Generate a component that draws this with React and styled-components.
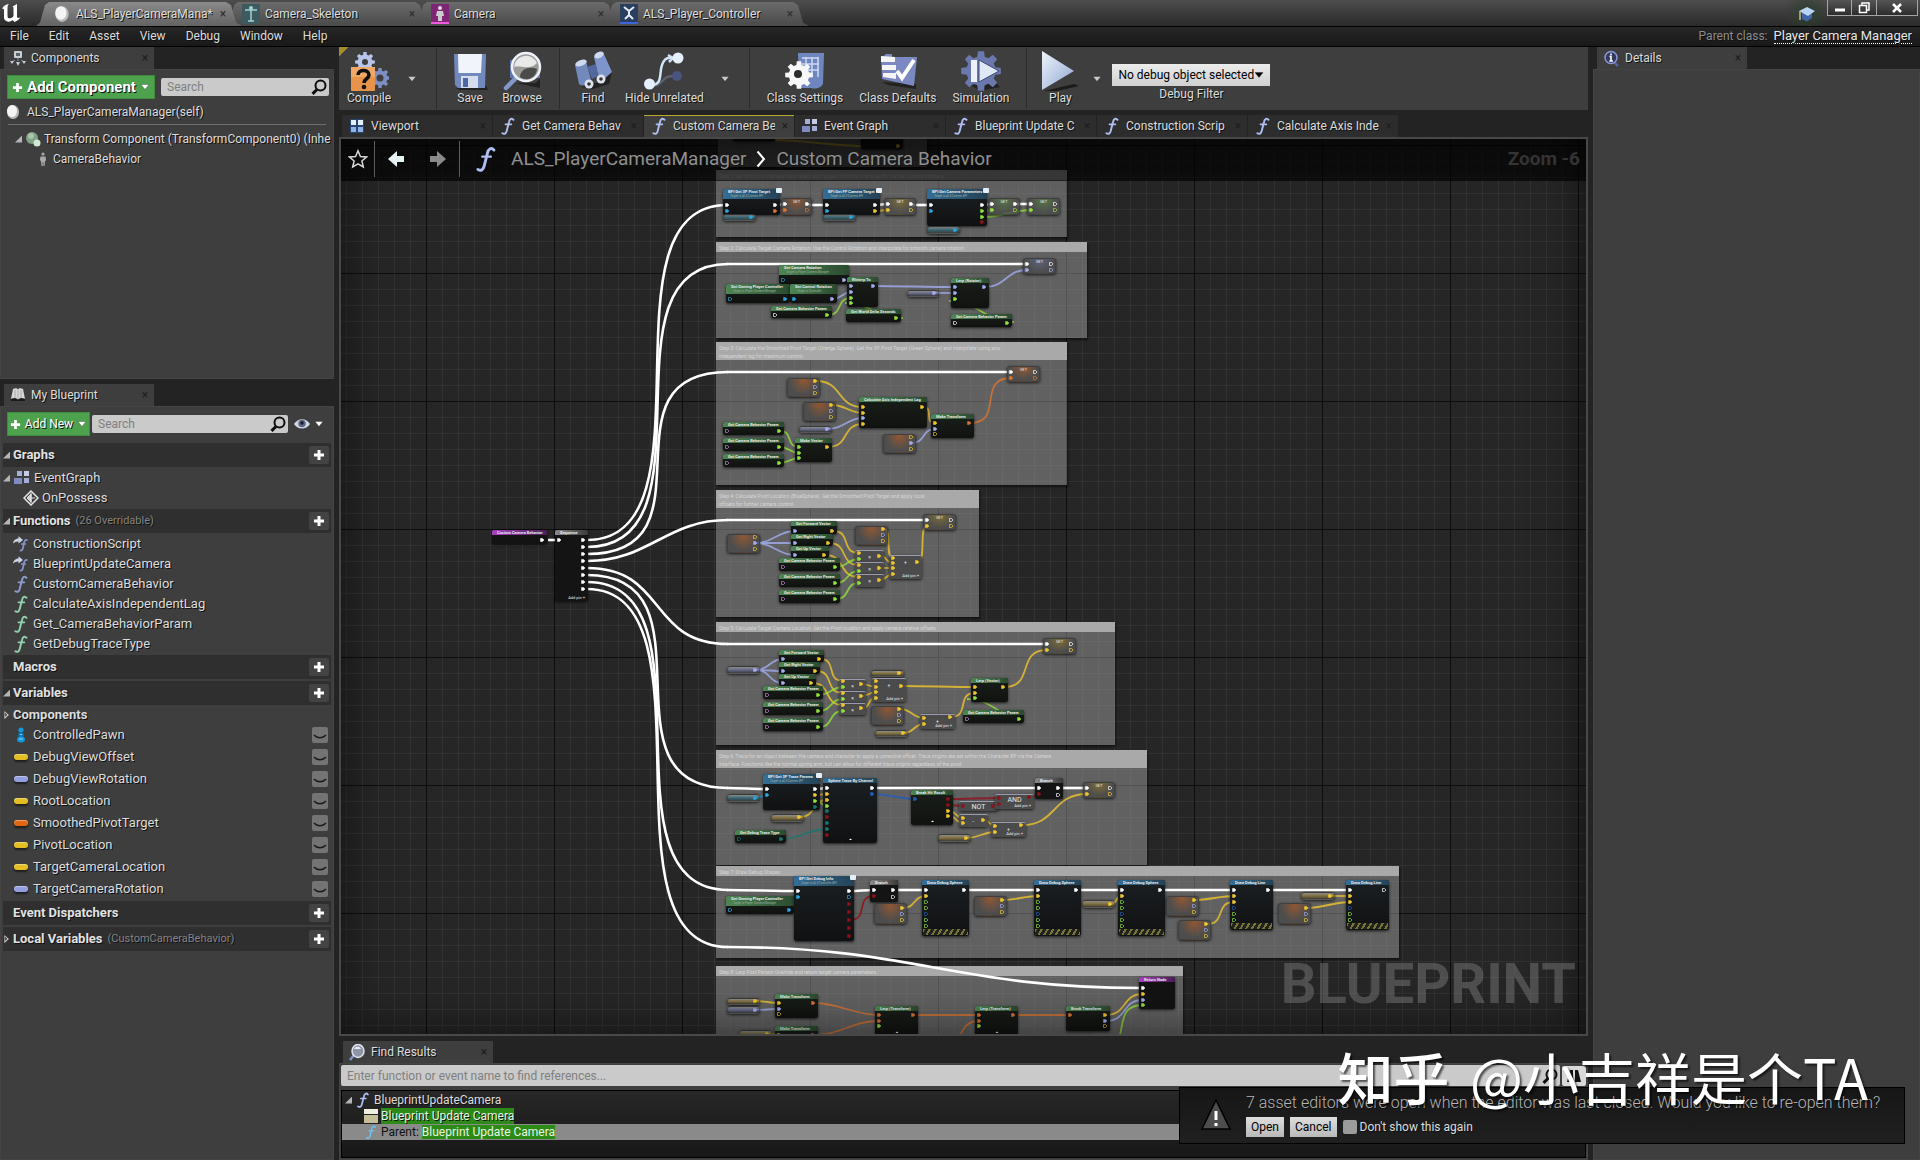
import React from 'react'
import styled, { createGlobalStyle, css } from 'styled-components'

const GlobalStyle = createGlobalStyle`
  * {
    box-sizing: border-box;
  }
  body {
    margin: 0;
    background: #232323;
    color: #dcdcdc;
    font-family: Roboto, 'Noto Sans CJK SC', sans-serif;
    font-size: 12px;
    line-height: 16px;
    overflow: hidden;
  }
  button, input, select {
    font: inherit;
    color: inherit;
    margin: 0;
    padding: 0;
    border: 0;
    background: none;
    text-shadow: inherit;
  }
  ul {
    list-style: none;
    margin: 0;
    padding: 0;
  }
`

/* ---------- icons ---------- */

const gear = (cx, cy, r, teeth) => {
  const pts = []
  const step = (Math.PI * 2) / teeth
  for (let i = 0; i < teeth; i++) {
    const a = i * step
    ;[[-0.32, 0.74], [-0.2, 1], [0.2, 1], [0.32, 0.74]].forEach(([off, k]) => {
      const t = a + off * step
      pts.push(`${(cx + Math.cos(t) * r * k).toFixed(1)},${(cy + Math.sin(t) * r * k).toFixed(1)}`)
    })
  }
  return pts.join(' ')
}

const FuncIcon = ({ color = '#aebdf2', size = 18 }) => (
  <svg width={size} height={size} viewBox="0 0 18 18" fill="none" stroke={color} strokeLinecap="round">
    <path d="M14.5 2.8C12.8.6 10.6 2 10 5L7.8 13.6C7.2 16.6 5.4 17.6 3.4 16.2" strokeWidth="2" />
    <path d="M6.4 7.4h6" strokeWidth="1.6" />
  </svg>
)

const OverrideIcon = () => (
  <svg width="18" height="18" viewBox="0 0 18 18" fill="none">
    <path d="M15.5 5.5c-1.500-1.500-3 0-3.400 2L11 13c-.5 2.300-1.800 3-3.200 2.200M9 9h5" stroke="#8793cc" strokeWidth="1.700" />
    <path d="M1 8.500C1.500 5 4 3.500 6.500 3.500V1.300L11 5 6.500 8.600V6.500C4.500 6.300 2.500 7 1 8.500z" fill="#cdd3e6" />
  </svg>
)

const GraphIcon = ({ size = 18 }) => (
  <svg width={size} height={size} viewBox="0 0 18 18">
    <g fill="#a5aed8">
      <rect x="4" y="2" width="5" height="5" />
      <rect x="11" y="2" width="5" height="5" fill="#c6cbe6" />
      <rect x="1" y="9" width="8" height="6" fill="#7f8ac2" />
      <rect x="11" y="9" width="5" height="5" />
    </g>
  </svg>
)

const ViewportIcon = () => (
  <svg width="18" height="18" viewBox="0 0 18 18">
    <rect x="2" y="2" width="14" height="14" fill="#27456e" />
    <path d="M3 3h5v5H3zM10 3h5v5h-5z" fill="#e6eefa" />
    <path d="M3 10h5v5H3zM10 10h5v5h-5z" fill="#8fb3e4" />
  </svg>
)

const EventIcon = () => (
  <svg width="16" height="16" viewBox="0 0 16 16" fill="none" stroke="#e6e6e6">
    <path d="M8 1l7 7-7 7-7-7z" strokeWidth="1.500" />
    <path d="M8 3v10M8 4L4 8l4 4z" fill="#cfcfcf" />
    <path d="M8 8h4" />
  </svg>
)

const SphereIcon = ({ size = 16 }) => (
  <svg width={size} height={size} viewBox="0 0 16 16">
    <ellipse cx="8" cy="8" rx="6" ry="7" fill="#b9b9b9" />
    <ellipse cx="7" cy="7" rx="5" ry="6" fill="#f4f4f4" />
  </svg>
)

const TransformIcon = () => (
  <svg width="16" height="16" viewBox="0 0 16 16">
    <circle cx="7" cy="7" r="6" fill="#7fa184" />
    <circle cx="6" cy="5" r="3" fill="#a9c4aa" />
    <circle cx="12" cy="12" r="3.500" fill="#d3ead2" />
  </svg>
)

const PersonIcon = ({ size = 14, color = '#a9a9a9' }) => (
  <svg width={size} height={size} viewBox="0 0 14 14" fill={color}>
    <circle cx="7" cy="2" r="1.600" />
    <path d="M4.500 4.500h5l.6 4-1 .3L8.500 14H7.300v-4h-.6v4H5.500l-.6-5.200-1-.3z" />
  </svg>
)

const ComponentsIcon = () => (
  <svg width="16" height="16" viewBox="0 0 16 16" fill="#c9cdd6">
    <rect x="4" y="1" width="8" height="7" rx="1" />
    <rect x="6" y="3" width="4" height="3" fill="#5b616d" />
    <path d="M8 8v3M2 12l3-2M14 12l-3-2" stroke="#8d93a3" />
    <path d="M0 11l4 0-2 3zM12 11h4l-2 3zM6 12h4l-2 4z" />
  </svg>
)

const BookIcon = () => (
  <svg width="16" height="16" viewBox="0 0 16 16">
    <path d="M3 2c2-1 4-1 5 .5C9 1 11 1 13 2l2 10c-3-1-5-1-7 .5C6 11 4 11 1 12z" fill="#d9d9d9" />
    <path d="M1 12c3-1 5-1 7 1 2-2 4-2 7-1v2H1z" fill="#1b1b1b" />
    <path d="M8 3v9M5 3v8M11 3v8" stroke="#a8a8a8" />
  </svg>
)

const LensIcon = () => (
  <svg width="17" height="17" viewBox="0 0 17 17">
    <path d="M5 11l-4 5" stroke="#7f93c6" strokeWidth="2.500" />
    <ellipse cx="9" cy="7" rx="6" ry="6.500" fill="#8d95a6" stroke="#dfe4ef" strokeWidth="1.500" />
    <path d="M5 5c1-3 6-3 7 0z" fill="#e9ecf4" />
  </svg>
)

const DetailsIcon = () => (
  <svg width="17" height="17" viewBox="0 0 17 17">
    <path d="M11 12l4 4" stroke="#5560a8" strokeWidth="2.500" />
    <circle cx="8" cy="7.500" r="6" fill="#33395c" stroke="#8c98d8" strokeWidth="1.500" />
    <path d="M8 3.500v1.800M6.500 6.500H8V11M6.300 11h3.600" stroke="#fff" strokeWidth="1.600" fill="none" />
  </svg>
)

const SearchIcon = ({ size = 16 }) => (
  <svg width={size} height={size} viewBox="0 0 16 16" fill="none" stroke="#0d0d0d">
    <circle cx="9.500" cy="6.500" r="5" strokeWidth="2" />
    <path d="M6 10.500L1.500 14.800" strokeWidth="3" />
  </svg>
)

const PlusIcon = ({ size = 12 }) => (
  <svg width={size} height={size} viewBox="0 0 12 12">
    <path d="M6 1v10M1 6h10" stroke="#fff" strokeWidth="3" />
  </svg>
)

const DownIcon = ({ color = '#fff' }) => (
  <svg width="10" height="8" viewBox="0 0 10 8">
    <path d="M1 1.500h8L5 6.500z" fill={color} stroke="#0008" strokeWidth=".5" />
  </svg>
)

const EyeIcon = () => (
  <svg width="18" height="14" viewBox="0 0 18 14">
    <path d="M1 7c4-6.500 12-6.500 16 0-4 6-12 6-16 0z" fill="#d7dae6" />
    <circle cx="9" cy="6.500" r="3.800" fill="#5f6988" />
    <circle cx="9" cy="6" r="1.700" fill="#1a1d28" />
  </svg>
)

const PawnIcon = () => (
  <svg width="18" height="16" viewBox="0 0 18 16" fill="#1398dc">
    <circle cx="9" cy="3" r="2.600" />
    <ellipse cx="9" cy="8" rx="3" ry="2.400" fill="#0d74ad" />
    <ellipse cx="9" cy="12.500" rx="4" ry="3" />
    <path d="M7 12h4M8 7.500h2" stroke="#8fd6ff" />
  </svg>
)

const UnrealLogo = () => (
  <svg width="24" height="22" viewBox="0 0 24 22" fill="none">
    <path d="M2 7C3 4 6 2.500 9 2c-1 1-1.500 2-1.500 3.500V14c0 2 1 2.500 2.500 2.200C11.500 16 13 15 13.500 14V5.500L12.500 4.500 17 2v12.500c0 1.500 1.500 2 3.500.5-1.500 3-4 4-6 5l-2-2c-1.500 1.500-3.500 2-5 1.500C5 18.800 4 17.500 4 15V8c0-1-1-1.500-2-1z" fill="#fff" />
  </svg>
)

const CapIcon = () => (
  <svg width="18" height="16" viewBox="0 0 18 16">
    <path d="M4 7v6l5 2.500L14 12V7z" fill="#3f66a3" />
    <path d="M1 5l8-4 8 4-7 5z" fill="#b9d4f5" />
    <path d="M2 5v9" stroke="#c9b98f" strokeWidth="1.500" />
  </svg>
)

const CompileIcon = () => (
  <svg width="40" height="40" viewBox="0 0 40 40">
    <polygon points={gear(16, 11, 10, 8)} fill="#b9c6ec" />
    <circle cx="16" cy="11" r="3" fill="#3e3e3e" />
    <polygon points={gear(31, 27, 10, 8)} fill="#7f8fc4" />
    <circle cx="31" cy="27" r="3.500" fill="#3e3e3e" />
    <rect x="2" y="16" width="24" height="24" rx="1" fill="#e8934a" />
    <rect x="2" y="16" width="24" height="10" fill="#f0a866" />
    <path d="M9 24c0-6 11-6 11 0 0 4-5 3.500-5 8" stroke="#111" strokeWidth="3.600" fill="none" />
    <circle cx="15" cy="36" r="2.300" fill="#111" />
  </svg>
)

const SaveIcon = () => (
  <svg width="40" height="40" viewBox="0 0 40 40">
    <path d="M6 37l30-2 2 4H10z" fill="#222" />
    <path d="M4 3h32l-1 34H8l-3-3z" fill="#7289bd" />
    <path d="M8 3h24l-1 19H8.500z" fill="#f1f4fa" />
    <rect x="11" y="25" width="17" height="12" fill="#d5dcec" />
    <rect x="13" y="27" width="5" height="9" fill="#4c66a6" />
  </svg>
)

const BrowseIcon = () => (
  <svg width="40" height="40" viewBox="0 0 40 40">
    <path d="M14 32h20l4-5v10z" fill="#222" />
    <rect x="8" y="9" width="30" height="18" fill="#5f76b0" />
    <path d="M15 26L4 37" stroke="#8397c9" strokeWidth="4.500" strokeLinecap="round" />
    <circle cx="24" cy="16" r="14" fill="#9a9a98" stroke="#eef2fb" strokeWidth="2.500" />
    <path d="M12 16a12 12 0 0 1 23-4c-8 8-16 2-23 4z" fill="#e9e9e9" />
    <path d="M18 26c0-8 10-11 17-8-1 9-10 13-17 8z" fill="#4b4b49" />
  </svg>
)

const FindIcon = () => (
  <svg width="40" height="40" viewBox="0 0 40 40">
    <path d="M8 36l22-6 9-9-3 12-16 5z" fill="#222" />
    <path d="M2 14l11-4 5 19c-2 5-9 7-12 4z" fill="#7289bd" />
    <path d="M21 6l9-5 9 20-7 6c-5 0-8-4-8-8z" fill="#7e95cb" />
    <path d="M14 16l9-3 2 12-6 3z" fill="#53689e" />
    <ellipse cx="8" cy="12" rx="6" ry="3" transform="rotate(-20 8 12)" fill="#ced9f0" />
    <ellipse cx="26" cy="4" rx="5" ry="3" transform="rotate(-25 26 4)" fill="#ced9f0" />
    <circle cx="16" cy="33" r="4.500" fill="#dce2ee" />
    <circle cx="28" cy="28" r="4.500" fill="#dce2ee" />
    <circle cx="16" cy="33" r="1.800" fill="#333" />
    <circle cx="28" cy="28" r="1.800" fill="#333" />
  </svg>
)

const HideIcon = () => (
  <svg width="40" height="40" viewBox="0 0 40 40" fill="none">
    <path d="M8 35c12 0 10-13 24-9" stroke="#5a6170" strokeWidth="2.500" />
    <circle cx="33" cy="25" r="5" fill="#47557f" />
    <path d="M7 34c12 0 8-12 11-20 2-6 6-8 10-7M24 4l5 3-4 4" stroke="#d3e4f7" strokeWidth="2.500" />
    <circle cx="34" cy="7" r="5.500" fill="#e4f0fd" />
    <circle cx="5.500" cy="33" r="5.500" fill="#e4f0fd" />
  </svg>
)

const SettingsIcon = () => (
  <svg width="40" height="40" viewBox="0 0 40 40">
    <path d="M13 2h26l-1 31c-3 5-8 5-12 4H14z" fill="#6f86c0" />
    <path d="M17 7h17M17 13h17M17 19h17M21 6v20M27 6v20M33 6v20" stroke="#cdd9f3" strokeWidth="1.500" />
    <polygon points={gear(14, 24, 14, 8)} fill="#f7f7f7" />
    <circle cx="13" cy="23" r="4" fill="#2c2c2c" />
  </svg>
)

const DefaultsIcon = () => (
  <svg width="40" height="40" viewBox="0 0 40 40">
    <path d="M4 31l34 2v5l-28-4z" fill="#222" />
    <path d="M8 3h6v3h25l-3 29L4 28 3 7z" fill="#7c88c2" />
    <path d="M3 5l14 1v5H3zM4 14h14v5H4zM5 22h13v6L5 26z" fill="#f4f4f6" />
    <path d="M19 20l5 7L36 9" stroke="#fff" strokeWidth="4" fill="none" />
  </svg>
)

const SimulationIcon = () => (
  <svg width="40" height="40" viewBox="0 0 40 40">
    <path d="M10 34l25-2 4 4-20 4z" fill="#222" />
    <polygon points={gear(20, 20, 20, 8)} fill="#6b78ae" />
    <path d="M10 9h6v22h-6z" fill="#eef1fa" />
    <path d="M18 9l20 11-20 11z" fill="#dfe8f7" stroke="#3c4670" />
  </svg>
)

const PlayIcon = () => (
  <svg width="40" height="40" viewBox="0 0 40 40">
    <defs>
      <linearGradient id="playFill" x1="0" y1="0" x2="1" y2="1">
        <stop offset="0" stopColor="#eef4fb" />
        <stop offset="1" stopColor="#8fa6d2" />
      </linearGradient>
    </defs>
    <path d="M4 40l30-7 5 2-22 5z" fill="#1b1b1b" />
    <path d="M2 0l32 20L2 39z" fill="url(#playFill)" />
  </svg>
)

/* ---------- shared parts ---------- */

const shadow = css`
  text-shadow: 1px 1px 0 #111;
`

const Page = styled.div`
  display: flex;
  flex-direction: column;
  height: 100vh;
  min-height: 600px;
  background: #232323;
  ${shadow}
`

const TitleBar = styled.header`
  display: flex;
  align-items: flex-start;
  height: 27px;
  padding-top: 2px;
  background: linear-gradient(#4d4d4d, #2a2a2a);
  border-bottom: 1px solid #000;
`

const Logo = styled.div`
  width: 36px;
  height: 22px;
`

const AssetTab = styled.div`
  position: relative;
  display: flex;
  align-items: center;
  gap: 5px;
  width: 206px;
  height: 24px;
  margin-right: -17px;
  padding: 0 14px 0 17px;
  z-index: ${p => (p.$active ? 2 : 1)};
  background: ${p => (p.$active ? 'linear-gradient(#8a8a8a, #636363)' : 'linear-gradient(#6b6b6b, #4a4a4a)')};
  clip-path: polygon(0 100%, 4px 85%, 9px 12%, 13px 0, 190px 0, 195px 12%, 200px 85%, 206px 100%);
`

const TabLabel = styled.button`
  flex: 1;
  min-width: 0;
  overflow: hidden;
  white-space: nowrap;
  text-align: left;
`

const CloseButton = styled.button`
  width: 10px;
  height: 16px;
  color: ${p => (p.$dim ? '#1d1d1d' : '#2c2c2c')};
  text-shadow: none;
`

const WindowTools = styled.div`
  display: flex;
  align-items: flex-start;
  margin-left: auto;
  margin-top: -2px;
  padding-right: 2px;
`

const CapBadge = styled.div`
  display: flex;
  justify-content: center;
  width: 60px;
  height: 26px;
  margin-right: -10px;
  padding-top: 6px;
  background: radial-gradient(circle, #2f3f2f, transparent 70%);
`

const WindowButton = styled.button`
  display: flex;
  align-items: center;
  justify-content: center;
  width: ${p => (p.$wide ? 41 : 25)}px;
  height: 16px;
  border: 1px solid #a5a5a5;
  border-top: 0;
  border-left-width: ${p => (p.$first ? 1 : 0)}px;
  background: linear-gradient(#555, #2d2d2d);
`

const MenuBar = styled.nav`
  display: flex;
  align-items: center;
  gap: 20px;
  height: 20px;
  padding: 0 8px 2px 10px;
  background: linear-gradient(#262626, #191919);
  border-bottom: 1px solid #000;
`

const ParentClass = styled.div`
  display: flex;
  gap: 6px;
  margin-left: auto;
  color: #8c8c8c;
  a {
    color: #e6e6e6;
    font-size: 13px;
    line-height: 15px;
    text-decoration: none;
    border-bottom: 1px dotted #fff;
  }
`

const Main = styled.main`
  display: grid;
  grid-template-columns: 334px minmax(0, 1fr) 327px;
  gap: 5px;
  flex: 1;
  min-height: 0;
`

const Column = styled.div`
  display: flex;
  flex-direction: column;
  min-width: 0;
  min-height: 0;
`

const TabStrip = styled.div`
  display: flex;
  gap: 1px;
  margin-top: ${p => (p.$spaced ? 5 : 0)}px;
  padding: 0 ${p => p.$inset || 4}px;
`

const PanelTab = styled.div`
  display: flex;
  align-items: center;
  gap: 5px;
  width: 150px;
  height: 22px;
  padding: 0 4px 0 6px;
  background: ${p => (p.$muted ? '#2d2d2d' : '#3e3e3e')};
  box-shadow: inset 0 1px 0 ${p => (p.$hot ? '#b9a82a' : 'transparent')};
`

const PanelBody = styled.section`
  display: flex;
  flex-direction: column;
  flex: ${p => p.$size || '1'};
  min-height: 0;
  background: #3e3e3e;
  border: 1px solid #444;
  overflow: hidden;
`

const ToolRow = styled.div`
  display: flex;
  align-items: center;
  gap: ${p => p.$gap || 6}px;
  padding: 5px 4px 5px 6px;
`

const AddButton = styled.button`
  display: flex;
  flex: none;
  align-items: center;
  justify-content: center;
  gap: 4px;
  width: ${p => p.$width}px;
  height: 24px;
  color: #fff;
  background: #4ea24e;
  border: 1px solid #3f8a3f;
  font-size: ${p => (p.$bold ? 15 : 12)}px;
  font-weight: ${p => (p.$bold ? 700 : 400)};
  white-space: nowrap;
`

const SearchBox = styled.label`
  display: flex;
  align-items: center;
  flex: 1;
  min-width: 0;
  height: ${p => p.$height || 18}px;
  padding: 0 2px 0 6px;
  border-radius: 2px;
  background: #cacaca;
  text-shadow: none;
  input {
    flex: 1;
    min-width: 0;
    color: #222;
    outline: 0;
  }
  input::placeholder {
    color: #808080;
    opacity: 1;
  }
`

const IconButton = styled.button`
  display: flex;
  align-items: center;
  gap: 3px;
  padding: 0 5px 0 3px;
`

const Tree = styled.ul`
  padding-top: ${p => (p.$large ? 1 : 0)}px;
  font-size: ${p => (p.$large ? 13 : 12)}px;
`

const TreeRow = styled.li`
  display: flex;
  align-items: center;
  gap: 3px;
  height: ${p => p.$height || 20}px;
  padding-left: ${p => p.$indent || 0}px;
  padding-right: 5px;
  white-space: nowrap;
  overflow: hidden;
  svg {
    flex: none;
  }
`

const Divider = styled.hr`
  width: calc(100% - 14px);
  margin: 4px 7px;
  border: 0;
  border-top: 1px solid #6e6e6e;
`

const Caret = styled.span`
  flex: none;
  width: 7px;
  height: 7px;
  background: #b5b5b5;
  clip-path: polygon(100% 0, 100% 100%, 0 100%);
`

const CaretClosed = styled.span`
  width: 7px;
  height: 8px;
  background: #c9c9c9;
  clip-path: polygon(20% 0, 85% 50%, 20% 100%, 20% 80%, 60% 50%, 32% 20%, 32% 100%, 20% 100%);
`

const SectionHead = styled.div`
  display: flex;
  align-items: center;
  height: 24px;
  margin: 2px 2px 0;
  background: #2f2f2f;
  font-size: 13px;
  font-weight: 700;
  color: #e2e2e2;
  ul + & {
    margin-top: 1px;
  }
  small {
    margin-left: 5px;
    color: #848484;
    font-size: 11px;
    font-weight: 400;
  }
`

const CaretSlot = styled.span`
  display: flex;
  width: 10px;
`

const PlusButton = styled.button`
  display: flex;
  align-items: center;
  justify-content: center;
  width: 20px;
  height: 18px;
  margin-left: auto;
  margin-right: 2px;
  border-radius: 2px;
  background: #434343;
`

const VarPill = styled.span`
  width: 14px;
  height: 6px;
  margin: 0 2px;
  border-radius: 3px;
  background: ${p => p.$color};
  box-shadow: inset 0 1px 1px #fff6, 0 2px 2px #0008;
`

const Visibility = styled.button`
  width: 16px;
  height: 16px;
  margin-left: auto;
  border-radius: 2px;
  background: #747474;
  display: flex;
`

/* ---------- toolbar ---------- */

const Toolbar = styled.div`
  display: flex;
  align-items: center;
  height: 63px;
  background: linear-gradient(135deg, #a58c2a 7px, #3e3e3e 7px);
`

const ToolButton = styled.button`
  display: flex;
  flex-direction: column;
  align-items: center;
  min-width: 48px;
  padding: 0 8px 1px;
  line-height: 15px;
  white-space: nowrap;
  svg {
    margin: 0 -4px;
  }
`

const ToolArrow = styled.button`
  display: flex;
  width: 12px;
  margin: 0 8px;
`

const ToolSep = styled.span`
  width: 1px;
  height: 61px;
  margin: 0 9px;
  background: #2b2b2b;
`

const DebugFilter = styled.div`
  display: flex;
  flex-direction: column;
  align-items: center;
  padding-top: 17px;
  align-self: flex-start;
`

const SelectWrap = styled.div`
  display: flex;
  align-items: center;
  height: 22px;
  padding: 0 6px;
  background: linear-gradient(#ececec, #cfcfcf);
  color: #000;
  text-shadow: none;
  select {
    appearance: none;
    outline: 0;
  }
`

/* ---------- graph ---------- */

const PAN = { x: 341, y: 139 }

const Canvas = styled.section`
  position: relative;
  flex: 1;
  min-height: 0;
  overflow: hidden;
  border: 2px solid #484848;
  background-color: #262626;
  background-image:
    linear-gradient(90deg, #0d0d0d 1px, transparent 1px),
    linear-gradient(#0d0d0d 1px, transparent 1px),
    linear-gradient(90deg, #323232 1px, transparent 1px),
    linear-gradient(#323232 1px, transparent 1px);
  background-size: 128px 128px, 128px 128px, 16px 16px, 16px 16px;
  background-position: 85px 0, 0 6px, 5px 0, 0 6px;
`

const Vignette = styled.div`
  position: absolute;
  inset: 0;
  box-shadow: inset 0 0 50px #0009;
  pointer-events: none;
`

const CommentBox = styled.div`
  position: absolute;
  background: #a6a6a677;
  box-shadow: 1px 2px 2px #0008;
  text-shadow: none;
`

const CommentHead = styled.div`
  padding: 2px 3px 0;
  background: #a9a9a9;
  color: #d6d6d6;
  font-size: 5px;
  line-height: 8px;
  white-space: pre-line;
`

const NODE_STYLES = {
  fn: css`background: linear-gradient(#1a1f1b, #101210); --head: linear-gradient(90deg, #4d8653, #2a4a2f);`,
  call: css`background: linear-gradient(#1b1f22, #101112); --head: linear-gradient(90deg, #346e97, #244256);`,
  flow: css`background: #141414; --head: linear-gradient(90deg, #8a8a8a, #3a3a3a);`,
  entry: css`background: #131313; --head: linear-gradient(90deg, #a93fc0, #4b1f55);`,
  set: css`
    background: radial-gradient(ellipse at 50% 8%, var(--tint), transparent 65%), #484848cc;
    border: 1px solid #3338;
    border-radius: 3px;
  `,
  pill: css`
    background: linear-gradient(#ccc6, var(--tint) 50%, #333c);
    border: 1px solid #3338;
    border-radius: 4px;
  `,
  op: css`
    background: #484848e8;
    border-top: 1px solid #9a9ab0;
    border-radius: 2px;
  `,
}

const TINTS = { y: '#8a7430cc', o: '#a0592ecc', l: '#62688fcc', g: '#587f47cc', c: '#2b6676cc' }

const NodeBox = styled.div`
  position: absolute;
  border-radius: 2px;
  box-shadow: 0 1px 3px #000b;
  color: #e9e9e9;
  font-size: 4px;
  line-height: 5px;
  text-align: center;
  text-shadow: none;
  --tint: ${p => TINTS[p.$tint] || '#555'};
  ${p => NODE_STYLES[p.$kind]}
`

const NodeHead = styled.div`
  height: ${p => (p.$tall ? 10 : 5)}px;
  padding: 0 5px;
  border-radius: 2px 2px 0 0;
  background: var(--head);
  font-weight: 700;
  text-align: left;
  white-space: nowrap;
  em {
    display: block;
    padding-left: 2px;
    color: #9fb09f;
    font-weight: 400;
    font-size: 3px;
  }
`

const Envelope = styled.span`
  position: absolute;
  right: -2px;
  top: -1px;
  width: 6px;
  height: 5px;
  border-radius: 1px;
  background: #e4f1fb;
`

const Hazard = styled.div`
  position: absolute;
  left: 1px;
  right: 1px;
  bottom: 1px;
  height: 6px;
  background: repeating-linear-gradient(120deg, #74753a 0 2px, #22221a 2px 5px);
`

const OpText = styled.div`
  padding-top: 4px;
  font-size: ${p => (p.$big ? 7 : 5)}px;
  line-height: ${p => (p.$big ? 3 : 5)}px;
`

const AddPin = styled.div`
  position: absolute;
  right: 3px;
  bottom: 1px;
`

const Wires = styled.svg`
  position: absolute;
  left: 0;
  top: 0;
  width: 100%;
  height: 100%;
  pointer-events: none;
`

const PIN = { w: '#fff', y: '#f0c62e', o: '#dc7430', c: '#2ba6de', l: '#a3adf0', g: '#93e23c', r: '#8e1119', t: '#14786f', b: '#235dbd', p: '#c48bd8' }

// x, y, width, height, header height, text
const comments = [
  [718, 120, 209, 47, 10, ''],
  [716, 170, 351, 67, 10, 'Step 1: Get Info from Camera Parameters and Targets from the Character BP via the Camera Interface'],
  [716, 242, 371, 96, 10, 'Step 2: Calculate Target Camera Rotation. Use the Control Rotation and interpolate for smooth camera rotation.'],
  [716, 342, 351, 143, 18, 'Step 3: Calculate the Smoothed Pivot Target (Orange Sphere). Get the 3P Pivot Target (Green Sphere) and interpolate using axis\nindependent lag for maximum control.'],
  [716, 490, 263, 127, 18, 'Step 4: Calculate Pivot Location (BlueSphere). Get the Smoothed Pivot Target and apply local\noffsets for further camera control.'],
  [716, 622, 399, 123, 10, 'Step 5: Calculate Target Camera Location. Get the Pivot location and apply camera relative offsets.'],
  [716, 750, 431, 115, 18, 'Step 6: Trace for an object between the camera and character to apply a corrective offset. Trace origins are set within the Character BP via the Camera\nInterface. Functions like the normal spring arm, but can allow for different trace origins regardless of the pivot.'],
  [716, 866, 683, 92, 10, 'Step 7: Draw Debug Shapes.'],
  [716, 966, 467, 90, 10, 'Step 8: Lerp First Person Override and return target camera parameters.'],
]

const param = 'Get Camera Behavior Param'

// kind, x, y, width, height, title, input pins, output pins, extras
// a pin is its y and its colour; a capital letter is an unconnected pin
const nodes = [
  ['flow', 733, 130, 42, 11, '', '', ''],
  ['flow', 861, 130, 42, 19, '', '', '146y'],
  ['call', 723, 189, 57, 26, 'BPI Get 3P Pivot Target', '205w 211c', '205w 211o', { sub: 'Target is ALS Camera BPI', mail: 1 }],
  ['pill', 723, 214, 33, 7, '', '', '217c', { tint: 'c' }],
  ['set', 781, 198, 31, 17, 'SET', '204w 210o', '204w 210O', { tint: 'o' }],
  ['call', 823, 189, 57, 26, 'BPI Get FP Camera Target', '205w 211c', '205w 211y', { sub: 'Target is ALS Camera BPI', mail: 1 }],
  ['pill', 823, 214, 33, 7, '', '', '217c', { tint: 'c' }],
  ['set', 884, 198, 32, 17, 'SET', '204w 210y', '204w 210Y', { tint: 'y' }],
  ['call', 927, 189, 60, 37, 'BPI Get Camera Parameters', '205w 211c', '205w 211g 217g 222r', { sub: 'Target is ALS Camera BPI', mail: 1 }],
  ['pill', 927, 226, 33, 8, '', '', '230c', { tint: 'c' }],
  ['set', 988, 198, 32, 17, 'SET', '204w 210g', '204w 210G', { tint: 'g' }],
  ['set', 1027, 198, 33, 17, 'SET', '204w 210g', '204W 210G', { tint: 'g' }],

  ['fn', 779, 265, 70, 19, 'Get Camera Rotation', '280C', '280l', { sub: 'Target is Player Camera Manager' }],
  ['fn', 726, 284, 64, 19, 'Get Owning Player Controller', '299C', '299c', { sub: 'Target is Player Camera Manager' }],
  ['fn', 790, 284, 47, 19, 'Get Control Rotation', '299c', '299l', { sub: 'Target is Controller' }],
  ['fn', 771, 306, 61, 12, param, '315W', '315g'],
  ['fn', 847, 277, 31, 30, 'RInterp To', '286l 292l 298g 303g', '286l'],
  ['fn', 846, 309, 55, 13, 'Get World Delta Seconds', '', '318g'],
  ['pill', 907, 290, 32, 7, '', '', '293l', { tint: 'l' }],
  ['fn', 951, 278, 38, 30, 'Lerp (Rotator)', '287l 293l 299g', '287l'],
  ['fn', 951, 314, 61, 13, param, '323W', '323g'],
  ['set', 1023, 258, 33, 16, 'SET', '264w 270l', '264W 270L', { tint: 'l' }],

  ['set', 787, 378, 33, 19, '', '', '381y 387L 393Y', { tint: 'o' }],
  ['set', 803, 402, 33, 19, '', '', '405y 411L 417Y', { tint: 'o' }],
  ['pill', 799, 426, 33, 7, '', '', '429l', { tint: 'l' }],
  ['set', 883, 434, 33, 19, '', '', '437Y 443l 449Y', { tint: 'o' }],
  ['fn', 723, 422, 61, 13, param, '431P', '431g'],
  ['fn', 723, 438, 61, 13, param, '447P', '447g'],
  ['fn', 723, 454, 61, 13, param, '463P', '463g'],
  ['fn', 795, 438, 37, 24, 'Make Vector', '447g 453g 458g', '447y'],
  ['fn', 859, 397, 68, 31, 'Calculate Axis Independent Lag', '407y 413y 418l 424y', '407y'],
  ['fn', 931, 414, 43, 24, 'Make Transform', '423y 429l 434Y', '423o'],
  ['set', 1007, 366, 33, 16, 'SET', '372w 378o', '372W 378O', { tint: 'o' }],

  ['entry', 492, 530, 55, 14, 'Custom Camera Behavior', '', '540w'],
  ['flow', 555, 530, 33, 71, 'Sequence', '540w', '540w 547w 554w 561w 568w 575w 582w 589w', { add: 1 }],

  ['set', 727, 534, 33, 19, '', '', '537Y 543l 549Y', { tint: 'o' }],
  ['fn', 791, 521, 46, 13, 'Get Forward Vector', '531l', '531y'],
  ['fn', 791, 534, 42, 12, 'Get Right Vector', '543l', '543y'],
  ['fn', 791, 546, 38, 12, 'Get Up Vector', '555l', '555y'],
  ['fn', 779, 558, 61, 13, param, '567P', '567g'],
  ['fn', 779, 574, 61, 13, param, '583P', '583g'],
  ['fn', 779, 590, 61, 13, param, '599P', '599g'],
  ['set', 855, 526, 33, 19, '', '', '529y 535L 541Y', { tint: 'o' }],
  ['op', 855, 550, 29, 12, '×', '553y 559g', '556y'],
  ['op', 855, 562, 29, 12, '×', '565y 571g', '568y'],
  ['op', 855, 574, 29, 13, '×', '577y 583g', '580y'],
  ['op', 889, 555, 33, 24, '+', '558y 563y 568y 574y', '562y', { add: 1 }],
  ['set', 923, 514, 33, 16, 'SET', '520w 526y', '520W 526Y', { tint: 'y' }],

  ['pill', 727, 666, 33, 8, '', '', '670l', { tint: 'l' }],
  ['fn', 779, 650, 45, 12, 'Get Forward Vector', '659l', '659y'],
  ['fn', 779, 662, 41, 12, 'Get Right Vector', '671l', '671y'],
  ['fn', 779, 674, 37, 12, 'Get Up Vector', '683l', '683y'],
  ['fn', 763, 686, 60, 13, param, '695P', '695g'],
  ['fn', 763, 702, 60, 13, param, '711P', '711g'],
  ['fn', 763, 718, 60, 13, param, '727P', '727g'],
  ['op', 839, 679, 27, 12, '×', '681y 687g', '684y'],
  ['op', 839, 691, 27, 12, '×', '693y 699g', '696y'],
  ['op', 839, 703, 27, 12, '×', '705y 711g', '708y'],
  ['pill', 871, 670, 33, 7, '', '', '673y', { tint: 'y' }],
  ['op', 872, 678, 34, 24, '+', '681y 687y 692y 698y', '686y', { add: 1 }],
  ['set', 871, 706, 33, 19, '', '', '709y 715L 721Y', { tint: 'o' }],
  ['pill', 875, 730, 33, 7, '', '', '733y', { tint: 'y' }],
  ['op', 920, 714, 35, 15, '+', '718y 724y', '717y', { add: 1 }],
  ['fn', 971, 678, 37, 24, 'Lerp (Vector)', '687y 693y 698g', '687y'],
  ['fn', 963, 710, 61, 13, param, '719P', '719g'],
  ['set', 1043, 638, 33, 16, 'SET', '644w 650y', '644W 650Y', { tint: 'y' }],

  ['call', 763, 774, 57, 36, 'BPI Get 3P Trace Params', '789w 795c', '789w 795y 801g 807t', { sub: 'Target is ALS Camera BPI', mail: 1 }],
  ['pill', 727, 794, 33, 8, '', '', '798c', { tint: 'c' }],
  ['pill', 771, 814, 33, 8, '', '', '817y', { tint: 'y' }],
  ['fn', 735, 830, 51, 13, 'Get Debug Trace Type', '839T', '839t'],
  ['call', 823, 778, 54, 65, 'Sphere Trace By Channel', '788w 794y 800y 806g 811t 817r 823t 829t 835r', '788w 794b', { more: 1 }],
  ['fn', 911, 790, 42, 35, 'Break Hit Result', '799b', '799r 805r 811y 816y', { more: 1 }],
  ['op', 959, 801, 39, 10, 'NOT', '806r', '806r', { big: 1 }],
  ['op', 995, 794, 39, 15, 'AND', '798r 804r', '797r', { add: 1, big: 1 }],
  ['op', 959, 814, 29, 13, '−', '818y 823y', '820y'],
  ['op', 991, 822, 35, 15, '+', '826y 832y', '825y', { add: 1 }],
  ['pill', 938, 834, 33, 8, '', '', '838y', { tint: 'y' }],
  ['flow', 1035, 778, 28, 21, 'Branch', '788w 794r', '788w 795W'],
  ['set', 1083, 782, 32, 16, 'SET', '788w 794y', '788W 794Y', { tint: 'y' }],

  ['fn', 726, 896, 68, 18, 'Get Owning Player Controller', '910C', '910c', { sub: 'Target is Player Camera Manager' }],
  ['call', 794, 876, 60, 65, 'BPI Get Debug Info', '891w 897c', '891w 897C 904r 912r 920r 928r 936r', { sub: 'Target is ALS Controller BPI', mail: 1 }],
  ['flow', 870, 880, 28, 22, 'Branch', '890w 896r', '890w 897W'],
  ['set', 874, 903, 33, 21, '', '', '908y 914L 920Y', { tint: 'o' }],
  ['call', 922, 880, 47, 56, 'Draw Debug Sphere', '890w 896y 902G 908G 914B 920G 926G', '890w', { dev: 1 }],
  ['set', 974, 896, 33, 20, '', '', '900y 906L 912Y', { tint: 'o' }],
  ['call', 1034, 880, 47, 56, 'Draw Debug Sphere', '890w 896y 902G 908G 914B 920G 926G', '890w', { dev: 1 }],
  ['pill', 1082, 900, 33, 8, '', '', '904y', { tint: 'y' }],
  ['call', 1118, 880, 47, 56, 'Draw Debug Sphere', '890w 896y 902G 908G 914B 920G 926G', '890w', { dev: 1 }],
  ['set', 1166, 896, 33, 20, '', '', '900y 906L 912Y', { tint: 'o' }],
  ['set', 1178, 920, 33, 20, '', '', '924y 930L 936Y', { tint: 'o' }],
  ['call', 1230, 880, 43, 50, 'Draw Debug Line', '890w 896y 902y 908B 914G 920G', '890w', { dev: 1 }],
  ['set', 1278, 903, 33, 21, '', '', '908y 914L 920Y', { tint: 'o' }],
  ['pill', 1301, 892, 34, 8, '', '', '896y', { tint: 'y' }],
  ['call', 1346, 880, 43, 50, 'Draw Debug Line', '890w 896y 902y 908B 914G 920G', '890W', { dev: 1 }],

  ['pill', 727, 998, 33, 7, '', '', '1001y', { tint: 'y' }],
  ['pill', 727, 1006, 33, 8, '', '', '1010l', { tint: 'l' }],
  ['fn', 775, 994, 43, 24, 'Make Transform', '1003y 1009l 1014Y', '1003o'],
  ['pill', 739, 1030, 33, 8, '', '', '1034y', { tint: 'y' }],
  ['fn', 775, 1026, 43, 24, 'Make Transform', '1035y', '1035o'],
  ['fn', 875, 1006, 43, 30, 'Lerp (Transform)', '1015o 1021o 1026g', '1015o', { more: 1 }],
  ['fn', 975, 1006, 43, 30, 'Lerp (Transform)', '1015o 1021o 1026g', '1015o', { more: 1 }],
  ['fn', 1066, 1006, 44, 25, 'Break Transform', '1015o', '1015y 1021l 1026Y'],
  ['fn', 1070, 1034, 24, 12, '', '', ''],
  ['entry', 1139, 977, 36, 32, 'Return Node', '988w 994y 1000l 1005g', ''],
]

// x1, y1, x2, y2, colour, thickness
const wires = [
  [775, 140, 862, 146, 'y'],
  [548, 540, 557, 540, 'w', 2],
  [587, 540, 727, 205, 'w', 2], [587, 547, 728, 264, 'w', 2], [587, 554, 728, 372, 'w', 2],
  [587, 561, 728, 520, 'w', 2], [587, 568, 728, 644, 'w', 2], [587, 575, 728, 788, 'w', 2],
  [587, 582, 728, 890, 'w', 2], [587, 589, 728, 947, 'w', 2],
  [727, 264, 1025, 264, 'w', 2], [727, 372, 1009, 372, 'w', 2], [727, 520, 925, 520, 'w', 2],
  [727, 644, 1045, 644, 'w', 2], [727, 788, 767, 789, 'w', 2], [727, 890, 798, 891, 'w', 2],
  [727, 947, 1141, 988, 'w', 2],
  [808, 205, 827, 205, 'w', 2], [776, 205, 785, 204, 'w', 2], [876, 205, 887, 204, 'w', 2],
  [912, 205, 931, 205, 'w', 2], [983, 205, 992, 204, 'w', 2], [1016, 204, 1031, 204, 'w', 2],
  [776, 211, 785, 210, 'o'], [876, 211, 887, 210, 'y'], [983, 211, 992, 210, 'g'], [983, 217, 1031, 210, 'g'],
  [833, 299, 851, 292, 'l'], [845, 280, 851, 286, 'l'], [828, 315, 851, 298, 'g'], [845, 303, 903, 318, 'g'],
  [874, 286, 955, 287, 'l'], [935, 293, 955, 293, 'l'], [949, 301, 1014, 322, 'g'], [985, 287, 1027, 270, 'l'],
  [816, 381, 863, 407, 'y'], [832, 405, 863, 413, 'y'], [828, 429, 863, 418, 'l'], [828, 447, 863, 424, 'y'],
  [780, 431, 799, 447, 'g'], [780, 447, 799, 453, 'g'], [780, 463, 799, 458, 'g'],
  [923, 407, 935, 423, 'y'], [912, 443, 935, 429, 'l'], [970, 423, 1011, 378, 'o'],
  [756, 543, 795, 531, 'l'], [756, 543, 795, 543, 'l'], [756, 543, 795, 555, 'l'],
  [833, 531, 859, 553, 'y'], [829, 543, 859, 565, 'y'], [825, 555, 859, 577, 'y'],
  [836, 567, 859, 559, 'g'], [836, 583, 859, 571, 'g'], [836, 599, 859, 583, 'g'],
  [884, 529, 893, 558, 'y'], [880, 556, 893, 563, 'y'], [880, 568, 893, 568, 'y'], [880, 580, 893, 574, 'y'],
  [918, 562, 927, 526, 'y'],
  [756, 670, 783, 659, 'l'], [756, 670, 783, 671, 'l'], [756, 670, 783, 683, 'l'],
  [820, 659, 843, 681, 'y'], [816, 671, 843, 693, 'y'], [812, 683, 843, 705, 'y'],
  [819, 695, 843, 687, 'g'], [819, 711, 843, 699, 'g'], [819, 727, 843, 711, 'g'],
  [862, 684, 876, 687, 'y'], [862, 696, 876, 692, 'y'], [862, 708, 876, 698, 'y'],
  [902, 686, 975, 687, 'y'], [900, 709, 924, 718, 'y'], [904, 733, 924, 724, 'y'], [951, 717, 975, 693, 'y'],
  [967, 699, 1024, 718, 'g'], [1004, 687, 1047, 650, 'y'],
  [816, 789, 827, 788, 'w', 2], [873, 788, 1039, 788, 'w', 2], [1059, 788, 1087, 788, 'w', 2],
  [756, 798, 767, 795, 'c'], [816, 795, 827, 794, 'y'], [816, 801, 827, 806, 'g'], [800, 817, 827, 800, 'y'],
  [782, 839, 827, 829, 't'], [873, 794, 915, 799, 'b'], [949, 799, 999, 798, 'r'], [949, 805, 963, 806, 'r'],
  [994, 806, 999, 804, 'r'], [1030, 797, 1039, 794, 'r'], [949, 811, 963, 818, 'y'], [949, 816, 963, 823, 'y'],
  [984, 820, 995, 826, 'y'], [967, 838, 995, 832, 'y'], [1022, 825, 1087, 794, 'y'],
  [850, 891, 874, 890, 'w', 2], [894, 890, 926, 890, 'w', 2], [965, 890, 1038, 890, 'w', 2],
  [1077, 890, 1122, 890, 'w', 2], [1161, 890, 1234, 890, 'w', 2], [1269, 890, 1350, 890, 'w', 2],
  [790, 910, 798, 897, 'c'], [850, 920, 874, 896, 'r'], [903, 908, 926, 896, 'y'], [1003, 900, 1038, 896, 'y'],
  [1111, 904, 1122, 896, 'y'], [1195, 900, 1234, 896, 'y'], [1207, 924, 1234, 902, 'y'],
  [1307, 908, 1350, 902, 'y'], [1331, 896, 1350, 896, 'y'],
  [756, 1001, 779, 1003, 'y'], [756, 1010, 779, 1009, 'l'], [768, 1034, 779, 1035, 'y'],
  [814, 1003, 879, 1015, 'o'], [814, 1035, 879, 1021, 'o'], [914, 1015, 979, 1015, 'o'],
  [944, 1044, 979, 1021, 'o'], [1014, 1015, 1070, 1015, 'o'],
  [1106, 1015, 1143, 994, 'y'], [1106, 1021, 1143, 1000, 'l'], [1100, 1050, 1143, 1005, 'g'],
]

const wirePath = ([x1, y1, x2, y2]) => {
  const dx = Math.abs(x2 - x1)
  const dy = Math.abs(y2 - y1)
  const d = dx > 200 ? dx * 0.45 : Math.min(dx * 0.95, dx * 0.3 + dy * 0.5)
  return `M${x1} ${y1}C${x1 + d} ${y1} ${x2 - d} ${y2} ${x2} ${y2}`
}

const Pin = ({ x, token }) => {
  const y = parseInt(token, 10)
  const letter = token.slice(-1)
  const hollow = letter !== letter.toLowerCase()
  const color = PIN[letter.toLowerCase()]
  return (
    <path
      d={`M${x - 1.5} ${y - 1.5}h2l1.500 1.500-1.500 1.500h-2z`}
      fill={hollow ? 'none' : color}
      stroke={color}
      strokeWidth={hollow ? 0.7 : 0.5}
    />
  )
}

const Node = ({ kind, x, y, w, h, title, extra = {} }) => {
  const headed = ['fn', 'call', 'flow', 'entry'].includes(kind)
  return (
    <NodeBox $kind={kind} $tint={extra.tint} style={{ left: x - PAN.x, top: y - PAN.y, width: w, height: h }}>
      {headed && (
        <NodeHead $tall={extra.sub}>
          {title}
          {extra.sub && <em>{extra.sub}</em>}
        </NodeHead>
      )}
      {kind === 'set' && title}
      {kind === 'op' && <OpText $big={extra.big}>{title}</OpText>}
      {extra.mail && <Envelope />}
      {extra.dev && <Hazard />}
      {extra.add && <AddPin>Add pin +</AddPin>}
    </NodeBox>
  )
}

const Crumbs = styled.div`
  position: absolute;
  left: 0;
  right: 0;
  top: 0;
  display: flex;
  align-items: center;
  height: 42px;
  padding: 0 6px 2px 7px;
  background: #000a;
  color: #8f8f8f;
  font-size: 19px;
  line-height: 24px;
  svg {
    flex: none;
  }
`

const CrumbButton = styled.button`
  display: flex;
  justify-content: center;
  width: ${p => p.$width}px;
`

const CrumbLine = styled.span`
  width: 1px;
  height: 36px;
  margin-left: ${p => (p.$gap ? 6 : 0)}px;
  background: #5c5c5c;
`

const ZoomText = styled.span`
  margin-left: auto;
  color: #343434;
  font-weight: 700;
  text-shadow: none;
`

const Stamp = styled.div`
  position: absolute;
  right: 10px;
  bottom: 18px;
  color: #8c8c8c66;
  font-size: 56px;
  line-height: 64px;
  font-weight: 700;
  text-shadow: none;
`

const Graph = () => (
  <Canvas>
    {comments.map(([x, y, w, h, head, text]) => (
      <CommentBox key={y} style={{ left: x - PAN.x, top: y - PAN.y, width: w, height: h }}>
        <CommentHead style={{ height: head }}>{text}</CommentHead>
      </CommentBox>
    ))}
    <Wires>
      <g transform={`translate(${-PAN.x} ${-PAN.y})`} fill="none">
        {wires.map((w, i) => (
          <path key={i} d={wirePath(w)} stroke={PIN[w[4]]} strokeWidth={w[5] ? 2.6 : 1.8} opacity={w[5] ? 1 : 0.8} />
        ))}
      </g>
    </Wires>
    {nodes.map(([kind, x, y, w, h, title, , , extra], i) => (
      <Node key={i} kind={kind} x={x} y={y} w={w} h={h} title={title} extra={extra} />
    ))}
    <Wires>
      <g transform={`translate(${-PAN.x} ${-PAN.y})`}>
        {nodes.map(([, x, y, w, h, , ins, outs, extra], i) => (
          <g key={i}>
            {ins.split(' ').filter(Boolean).map((t, j) => <Pin key={j} x={x + 4} token={t} />)}
            {outs.split(' ').filter(Boolean).map((t, j) => <Pin key={j} x={x + w - 5} token={t} />)}
            {extra && extra.more && <path d={`M${x + w / 2 - 1} ${y + h - 3}h3l-1.500-1.500z`} fill="#fff" />}
          </g>
        ))}
      </g>
    </Wires>
    <Vignette />
    <Stamp>BLUEPRINT</Stamp>
    <Crumbs>
      <CrumbButton $width={20} aria-label="Bookmark">
        <svg width="20" height="20" viewBox="0 0 20 20" fill="none" stroke="#d9d9d9" strokeWidth="1.500">
          <path d="M10 1.800l2.400 5.700 6.100.5-4.600 4 1.400 6L10 14.800 4.700 18l1.400-6-4.600-4 6.100-.5z" />
        </svg>
      </CrumbButton>
      <CrumbLine $gap />
      <CrumbButton $width={41} aria-label="Back">
        <svg width="18" height="18" viewBox="0 0 18 18"><path d="M1 9l9-8v5h7v6h-7v5z" fill="#e6f3f5" /></svg>
      </CrumbButton>
      <CrumbButton $width={43} aria-label="Forward">
        <svg width="18" height="18" viewBox="0 0 18 18"><path d="M17 9L8 1v5H1v6h7v5z" fill="#8a8a8a" /></svg>
      </CrumbButton>
      <CrumbLine />
      <CrumbButton as="span" $width={51}><FuncIcon size={26} /></CrumbButton>
      <span>ALS_PlayerCameraManager</span>
      <CrumbButton as="span" $width={30}>
        <svg width="10" height="18" viewBox="0 0 10 18" fill="none" stroke="#fff" strokeWidth="2"><path d="M1.500 1.500L8 9l-6.500 7.500" /></svg>
      </CrumbButton>
      <span>Custom Camera Behavior</span>
      <ZoomText>Zoom -6</ZoomText>
    </Crumbs>
  </Canvas>
)

/* ---------- find results ---------- */

const FindBody = styled(PanelBody)`
  flex: none;
  padding: 1px;
`

const FindRow = styled.div`
  display: flex;
  align-items: center;
  gap: 2px;
`

const BinocularButton = styled.button`
  display: flex;
  align-items: center;
  justify-content: center;
  width: 24px;
  height: 20px;
  border-radius: 2px;
  background: #d8d8d8;
`

const ResultList = styled.ul`
  height: 68px;
  margin-top: 4px;
  padding-top: 1px;
  border: 1px solid #000;
  background: linear-gradient(#272727, #181818);
`

const ResultRow = styled.li`
  display: flex;
  align-items: center;
  gap: 3px;
  height: 16px;
  padding-left: ${p => p.$indent}px;
  background: ${p => (p.$selected ? '#8a8a8a' : 'none')};
  color: ${p => (p.$selected ? '#111' : '#dcdcdc')};
  text-shadow: ${p => (p.$selected ? 'none' : 'inherit')};
  mark {
    background: #2c8a17;
    color: #e8f5e4;
  }
`

/* ---------- notification ---------- */

const Toast = styled.aside`
  position: fixed;
  right: 15px;
  bottom: 16px;
  display: flex;
  align-items: center;
  gap: 15px;
  width: 726px;
  height: 57px;
  padding: 0 0 2px 21px;
  background: linear-gradient(#161616, #202020);
  border: 1px solid #000;
  > svg {
    flex: none;
  }
`

const ToastText = styled.p`
  margin: 0 0 4px;
  color: #b5b5b5;
  font-size: 16px;
  line-height: 20px;
  font-weight: 300;
  white-space: nowrap;
`

const ToastActions = styled.div`
  display: flex;
  align-items: center;
  gap: 6px;
  label {
    display: flex;
    align-items: center;
    gap: 3px;
  }
  input {
    appearance: none;
    width: 14px;
    height: 14px;
    border-radius: 2px;
    background: #9b9b9b;
  }
`

const LightButton = styled.button`
  height: 20px;
  padding: 0 5px;
  background: linear-gradient(#dedede, #b9b9b9);
  color: #000;
  text-shadow: none;
`

const Credit = styled.div`
  position: fixed;
  right: 52px;
  bottom: 48px;
  color: #fff;
  font-family: 'Noto Sans CJK SC', sans-serif;
  font-size: 56px;
  line-height: 72px;
  white-space: nowrap;
  text-shadow: 2px 2px 2px #0009;
  b {
    margin-right: 8px;
    font-weight: 500;
  }
`

/* ---------- page ---------- */

const YELLOW = '#e3bd22'
const BLUE = '#939fe0'

const assetTabs = [
  ['ALS_PlayerCameraMana*', <SphereIcon size={18} />],
  ['Camera_Skeleton', (
    <svg width="18" height="20" viewBox="0 0 18 20">
      <rect width="18" height="20" fill="#3c5a60" />
      <path d="M9 3v14M3 6h12M6 17h6" stroke="#9fd4d0" strokeWidth="1.500" />
      <circle cx="9" cy="4" r="2" fill="#9fd4d0" />
    </svg>
  )],
  ['Camera', (
    <svg width="18" height="20" viewBox="0 0 18 20">
      <rect width="18" height="20" fill="#7e2575" />
      <circle cx="9" cy="4" r="2" fill="#ddd" />
      <path d="M6 7h6l1 5h-2v5H7v-5H5z" fill="#ccc" />
      <path d="M0 19h18" stroke="#f05ae0" strokeWidth="2" />
    </svg>
  )],
  ['ALS_Player_Controller', (
    <svg width="18" height="20" viewBox="0 0 18 20">
      <rect width="18" height="20" fill="#2a3f5e" />
      <path d="M4 3l5 4 5-4M9 7v5M5 15l4-4 4 4" stroke="#e6ecf5" strokeWidth="2" fill="none" />
      <path d="M0 19h18" stroke="#3c66d8" strokeWidth="2" />
    </svg>
  )],
]

const graphTabs = [
  ['Viewport', <ViewportIcon />],
  ['Get Camera Behav', <FuncIcon />],
  ['Custom Camera Be', <FuncIcon />, true],
  ['Event Graph', <GraphIcon />],
  ['Blueprint Update C', <FuncIcon />],
  ['Construction Scrip', <FuncIcon />],
  ['Calculate Axis Inde', <FuncIcon />],
]

const functions = [
  ['ConstructionScript', <OverrideIcon />],
  ['BlueprintUpdateCamera', <OverrideIcon />],
  ['CustomCameraBehavior', <FuncIcon color="#8f9bd0" />],
  ['CalculateAxisIndependentLag', <FuncIcon color="#8fd0ae" />],
  ['Get_CameraBehaviorParam', <FuncIcon color="#8fd0ae" />],
  ['GetDebugTraceType', <FuncIcon color="#8fd0ae" />],
]

const variables = [
  ['ControlledPawn'],
  ['DebugViewOffset', YELLOW],
  ['DebugViewRotation', BLUE],
  ['RootLocation', YELLOW],
  ['SmoothedPivotTarget', '#e0660f'],
  ['PivotLocation', YELLOW],
  ['TargetCameraLocation', YELLOW],
  ['TargetCameraRotation', BLUE],
]

const Section = ({ title, note, caret }) => (
  <SectionHead>
    <CaretSlot>{caret === 'open' ? <Caret /> : caret === 'closed' ? <CaretClosed /> : null}</CaretSlot>
    {title}
    {note && <small>({note})</small>}
    <PlusButton aria-label={`Add to ${title}`}><PlusIcon /></PlusButton>
  </SectionHead>
)

const DockTab = ({ icon, children, muted, hot }) => (
  <PanelTab $muted={muted} $hot={hot}>
    {icon}
    <TabLabel>{children}</TabLabel>
    <CloseButton $dim aria-label="Close tab">×</CloseButton>
  </PanelTab>
)

const Tool = ({ icon, children }) => (
  <ToolButton>
    {icon}
    {children}
  </ToolButton>
)

const Arrow = () => (
  <ToolArrow aria-label="Options"><DownIcon color="#c9c9c9" /></ToolArrow>
)

const LeftColumn = () => (
  <Column>
    <TabStrip><DockTab icon={<ComponentsIcon />}>Components</DockTab></TabStrip>
    <PanelBody $size="0 0 310px">
      <ToolRow>
        <AddButton $width={148} $bold><PlusIcon size={11} />Add Component<DownIcon /></AddButton>
        <SearchBox><input aria-label="Search components" placeholder="Search" /><SearchIcon /></SearchBox>
      </ToolRow>
      <Tree>
        <TreeRow $indent={4} $height={16}><SphereIcon />&nbsp;ALS_PlayerCameraManager(self)</TreeRow>
        <Divider />
        <TreeRow $indent={14}><Caret /><TransformIcon />Transform Component (TransformComponent0) (Inhe</TreeRow>
        <TreeRow $indent={35}><PersonIcon />CameraBehavior</TreeRow>
      </Tree>
    </PanelBody>
    <TabStrip $spaced><DockTab icon={<BookIcon />}>My Blueprint</DockTab></TabStrip>
    <PanelBody>
      <ToolRow $gap={2}>
        <AddButton $width={83}><PlusIcon size={11} />Add New<DownIcon /></AddButton>
        <SearchBox><input aria-label="Search blueprint" placeholder="Search" /><SearchIcon /></SearchBox>
        <IconButton aria-label="View options"><EyeIcon /><DownIcon /></IconButton>
      </ToolRow>
      <Section title="Graphs" caret="open" />
      <Tree $large>
        <TreeRow $indent={2}><Caret /><GraphIcon />EventGraph</TreeRow>
        <TreeRow $indent={22}><EventIcon />OnPossess</TreeRow>
      </Tree>
      <Section title="Functions" note="26 Overridable" caret="open" />
      <Tree $large>
        {functions.map(([name, icon]) => (
          <TreeRow key={name} $indent={11}>{icon}{name}</TreeRow>
        ))}
      </Tree>
      <Section title="Macros" />
      <Section title="Variables" caret="open" />
      <Tree $large>
        <TreeRow $indent={2} $height={18}><CaretClosed /><b>Components</b></TreeRow>
        {variables.map(([name, color]) => (
          <TreeRow key={name} $indent={11} $height={22}>
            {color ? <VarPill $color={color} /> : <PawnIcon />}
            {name}
            <Visibility aria-label={`Toggle ${name}`}>
              <svg width="16" height="16" viewBox="0 0 16 16" fill="none" stroke="#1a1a1a" strokeWidth="1.500">
                <path d="M2 8c3 3.500 9 3.500 12 0" />
              </svg>
            </Visibility>
          </TreeRow>
        ))}
      </Tree>
      <Section title="Event Dispatchers" />
      <Section title="Local Variables" note="CustomCameraBehavior" caret="closed" />
    </PanelBody>
  </Column>
)

const CenterColumn = () => (
  <Column>
    <Toolbar>
      <Tool icon={<CompileIcon />}>Compile</Tool>
      <Arrow />
      <ToolSep />
      <Tool icon={<SaveIcon />}>Save</Tool>
      <Tool icon={<BrowseIcon />}>Browse</Tool>
      <ToolSep />
      <Tool icon={<FindIcon />}>Find</Tool>
      <Tool icon={<HideIcon />}>Hide Unrelated</Tool>
      <Arrow />
      <ToolSep />
      <Tool icon={<SettingsIcon />}>Class Settings</Tool>
      <Tool icon={<DefaultsIcon />}>Class Defaults</Tool>
      <Tool icon={<SimulationIcon />}>Simulation</Tool>
      <ToolSep />
      <Tool icon={<PlayIcon />}>Play</Tool>
      <Arrow />
      <DebugFilter>
        <SelectWrap>
          <select id="debug-filter"><option>No debug object selected</option></select>
          <DownIcon color="#000" />
        </SelectWrap>
        <label htmlFor="debug-filter">Debug Filter</label>
      </DebugFilter>
    </Toolbar>
    <TabStrip $inset={3} $spaced>
      {graphTabs.map(([name, icon, hot]) => (
        <DockTab key={name} icon={icon} muted={!hot} hot={hot}>{name}</DockTab>
      ))}
    </TabStrip>
    <Graph />
    <TabStrip $spaced><DockTab icon={<LensIcon />}>Find Results</DockTab></TabStrip>
    <FindBody>
      <FindRow>
        <SearchBox $height={21}>
          <input aria-label="Find references" placeholder="Enter function or event name to find references..." />
          <SearchIcon />
        </SearchBox>
        <BinocularButton aria-label="Find in all blueprints">
          <svg width="16" height="14" viewBox="0 0 16 14"><path d="M4 1h3v12H1zM9 1h3l3 12H9z" fill="#111" /></svg>
        </BinocularButton>
      </FindRow>
      <ResultList>
        <ResultRow $indent={3}><Caret /><FuncIcon size={16} />BlueprintUpdateCamera</ResultRow>
        <ResultRow $indent={22}>
          <svg width="14" height="14" viewBox="0 0 14 14"><path d="M0 0h14v5H0z" fill="#f1efe2" /><path d="M0 6h14v8H0z" fill="#c5bc98" /></svg>
          <mark>Blueprint Update Camera</mark>
        </ResultRow>
        <ResultRow $indent={22} $selected>
          <FuncIcon size={14} color="#6fc0ee" />
          <span>Parent: <mark>Blueprint Update Camera</mark></span>
        </ResultRow>
      </ResultList>
    </FindBody>
  </Column>
)

const App = () => (
  <Page>
    <GlobalStyle />
    <TitleBar>
      <Logo><UnrealLogo /></Logo>
      {assetTabs.map(([name, icon], i) => (
        <AssetTab key={name} $active={i === 0}>
          {icon}
          <TabLabel>{name}</TabLabel>
          <CloseButton aria-label="Close tab">×</CloseButton>
        </AssetTab>
      ))}
      <WindowTools>
        <CapBadge><CapIcon /></CapBadge>
        <WindowButton $first aria-label="Minimize">
          <svg width="12" height="10" viewBox="0 0 12 10"><path d="M1 7h10" stroke="#fff" strokeWidth="3" /></svg>
        </WindowButton>
        <WindowButton aria-label="Restore">
          <svg width="12" height="12" viewBox="0 0 12 12" fill="none" stroke="#fff" strokeWidth="1.500"><path d="M4 3V1h7v7H9M1.500 3.500h7v7h-7z" /></svg>
        </WindowButton>
        <WindowButton $wide aria-label="Close">
          <svg width="12" height="10" viewBox="0 0 12 10"><path d="M2 1l8 8M10 1L2 9" stroke="#fff" strokeWidth="2.500" /></svg>
        </WindowButton>
      </WindowTools>
    </TitleBar>
    <MenuBar>
      {['File', 'Edit', 'Asset', 'View', 'Debug', 'Window', 'Help'].map(m => <button key={m}>{m}</button>)}
      <ParentClass>Parent class: <a href="#parent">Player Camera Manager</a></ParentClass>
    </MenuBar>
    <Main>
      <LeftColumn />
      <CenterColumn />
      <Column>
        <TabStrip><DockTab icon={<DetailsIcon />}>Details</DockTab></TabStrip>
        <PanelBody />
      </Column>
    </Main>
    <Toast>
      <svg width="30" height="32" viewBox="0 0 30 32">
        <path d="M15 1l14 29H1z" fill="#4d4d4d" stroke="#000" strokeWidth="1.500" />
        <path d="M15 12v9M15 24v3" stroke="#fff" strokeWidth="3" />
      </svg>
      <div>
        <ToastText>7 asset editors were open when the editor was last closed. Would you like to re-open them?</ToastText>
        <ToastActions>
          <LightButton>Open</LightButton>
          <LightButton>Cancel</LightButton>
          <label><input type="checkbox" />Don't show this again</label>
        </ToastActions>
      </div>
    </Toast>
    <Credit><b>知乎</b> @小吉祥是个TA</Credit>
  </Page>
)

export default App
